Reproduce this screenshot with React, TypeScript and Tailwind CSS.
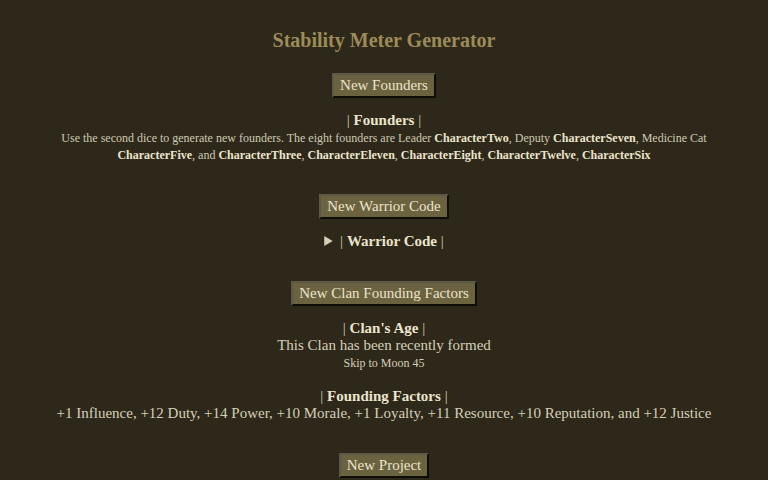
import React from "react";

const names = {
  leader: "CharacterTwo",
  deputy: "CharacterSeven",
  medicine: "CharacterFive",
  rest: ["CharacterThree", "CharacterEleven", "CharacterEight", "CharacterTwelve", "CharacterSix"],
};

const factors = [
  "+1 Influence",
  "+12 Duty",
  "+14 Power",
  "+10 Morale",
  "+1 Loyalty",
  "+11 Resource",
  "+10 Reputation",
];

// old-school raised button
const GenButton = ({ label }: { label: string }) => (
  <button className="bg-[#6b623f] text-[#ece4cc] text-[15px] leading-[17px] px-[6px] py-[2px] border-2 border-t-[#5b5848] border-l-[#5b5848] border-b-[#0e0c06] border-r-[#0e0c06] cursor-pointer">
    {label}
  </button>
);

const Heading = ({ children }: { children: React.ReactNode }) => (
  <div className="text-[15px] leading-[18px] text-[#cfc8b4]">
    | <b className="text-[#ece4cc]">{children}</b> |
  </div>
);

export default function App() {
  return (
    <div className="min-h-[480px] bg-[#2d2819] text-[#d6cfba] font-['Liberation_Serif',serif] flex flex-col items-center text-center">
      <h1 className="mt-[28px] text-[20px] leading-[24px] font-bold text-[#9d8b58]">Stability Meter Generator</h1>

      <div className="mt-[21px]">
        <GenButton label="New Founders" />
      </div>
      <div className="mt-[13px]">
        <Heading>Founders</Heading>
      </div>
      <p className="mt-[1px] text-[12px] leading-[17px] px-[60px] text-[#cfc8b4]">
        Use the second dice to generate new founders. The eight founders are Leader{" "}
        <b className="text-[#ece4cc]">{names.leader}</b>, Deputy <b className="text-[#ece4cc]">{names.deputy}</b>, Medicine Cat{" "}
        <b className="text-[#ece4cc]">{names.medicine}</b>, and{" "}
        {names.rest.map((n, i) => (
          <React.Fragment key={n}>
            <b className="text-[#ece4cc]">{n}</b>
            {i < names.rest.length - 1 ? ", " : ""}
          </React.Fragment>
        ))}
      </p>

      <div className="mt-[30px]">
        <GenButton label="New Warrior Code" />
      </div>
      <details className="mt-[13px] text-[15px] leading-[18px]">
        <summary className="cursor-pointer">
          <span className="text-[#cfc8b4]">
            | <b className="text-[#ece4cc]">Warrior Code</b> |
          </span>
        </summary>
      </details>

      <div className="mt-[31px]">
        <GenButton label="New Clan Founding Factors" />
      </div>
      <div className="mt-[13px]">
        <Heading>Clan's Age</Heading>
      </div>
      <div className="text-[15px] leading-[17px]">This Clan has been recently formed</div>
      <div className="text-[12px] leading-[17px] mt-[1px]">Skip to Moon 45</div>

      <div className="mt-[15px]">
        <Heading>Founding Factors</Heading>
      </div>
      <div className="text-[15px] leading-[17px]">
        {factors.join(", ")}, and +12 Justice
      </div>

      <div className="mt-[31px]">
        <GenButton label="New Project" />
      </div>
    </div>
  );
}
